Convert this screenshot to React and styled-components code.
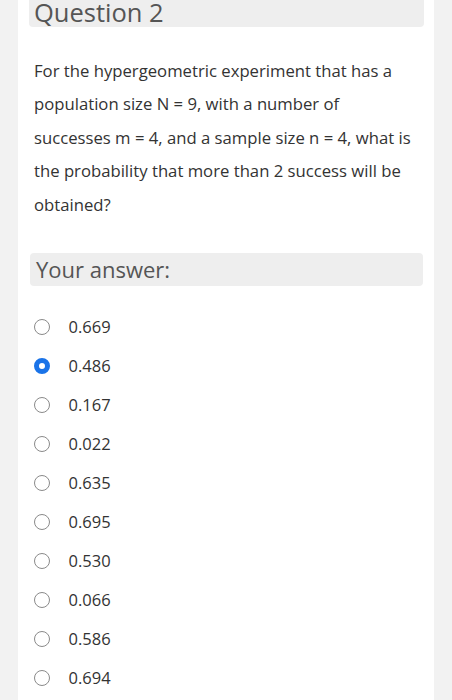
import React from "react";
import styled, { createGlobalStyle } from "styled-components";

const Global = createGlobalStyle`
  body {
    margin: 0;
    background: #f2f2f2;
    font-family: "Open Sans", "Noto Sans", sans-serif;
    color: #333;
  }
`;

const Card = styled.div`
  margin: 0 18px;
  min-height: 700px;
  background: #ffffff;
  padding: 0 10px 0 11px;
  box-sizing: border-box;
`;

const Heading = styled.div`
  height: 27px;
  display: flex;
  align-items: flex-end;
  padding: 0 5px 3px;
  box-sizing: border-box;
  background: #eeeeee;
  border-radius: ${(p) => (p.$top ? "0 0 4px 4px" : "4px")};
  font-size: ${(p) => (p.$top ? "25.5px" : "22px")};
  line-height: 24px;
  color: #555;
`;

const AnswerHead = styled(Heading)`
  height: 32.5px;
  margin: 32px 1px 0;
  padding: 0 6px 4px;
  line-height: 26px;
`;

const Prompt = styled.p`
  margin: 26.7px 0 0;
  padding: 0 5px;
  max-width: 383px;
  font-size: 16.7px;
  line-height: 33.5px;
  color: #333;
`;

const Options = styled.div`
  margin-top: 21.5px;
  display: flex;
  flex-direction: column;
`;

const Row = styled.label`
  height: 39px;
  display: flex;
  align-items: center;
  padding-left: 5px;
  font-size: 16.5px;
  color: #333;
`;

const Radio = styled.span`
  width: 16px;
  height: 16px;
  box-sizing: border-box;
  border-radius: 50%;
  border: ${(p) => (p.$checked ? "5px solid #1a73e8" : "1.5px solid #8a8a8a")};
  background: #fff;
  margin-right: 18.5px;
  flex-shrink: 0;
`;

const answers = [
  "0.669",
  "0.486",
  "0.167",
  "0.022",
  "0.635",
  "0.695",
  "0.530",
  "0.066",
  "0.586",
  "0.694",
];

export default function App() {
  return (
    <>
      <Global />
      <Card>
        <Heading $top>Question 2</Heading>
        <Prompt>
          For the hypergeometric experiment that has a population size N = 9,
          with a number of successes m = 4, and a sample size n = 4, what is
          the probability that more than 2 success will be obtained?
        </Prompt>
        <AnswerHead>Your answer:</AnswerHead>
        <Options>
          {answers.map((a, i) => (
            <Row key={a}>
              <Radio $checked={i === 1} />
              {a}
            </Row>
          ))}
        </Options>
      </Card>
    </>
  );
}
